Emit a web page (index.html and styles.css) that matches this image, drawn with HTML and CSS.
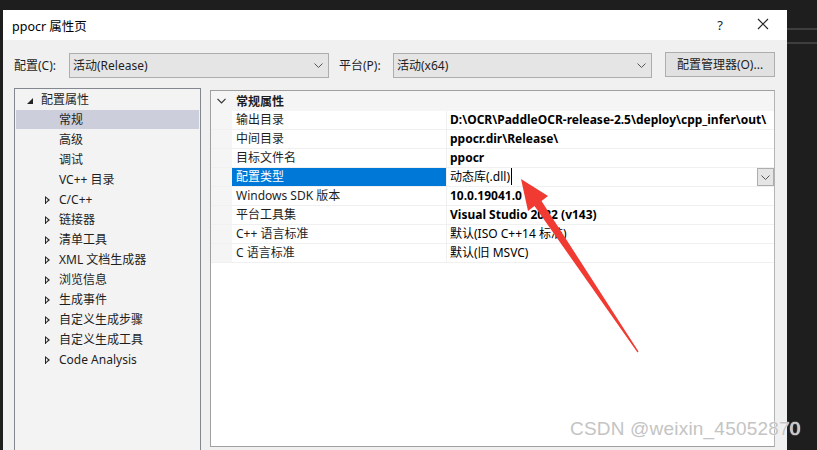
FILE: index.html
```html
<!DOCTYPE html>
<html lang="zh-CN">
<head>
    <meta charset="UTF-8">
    <title>ppocr 属性页</title>
    <link rel="stylesheet" href="styles.css">
</head>
<body>
    <div class="side-left"></div>
    <div class="window">
        <div class="titlebar">
            <span class="title">ppocr 属性页</span>
            <span class="help">?</span>
            <svg class="close" width="12" height="12" viewBox="0 0 12 12"><path d="M1 1L11 11M11 1L1 11" stroke="#222" stroke-width="1.1" fill="none"/></svg>
        </div>
        <div class="content">
            <div class="toolbar">
                <span class="tb-label">配置(C):</span>
                <div class="combo combo-config">
                    <span>活动(Release)</span>
                    <svg class="chev" width="9" height="5" viewBox="0 0 9 5"><path d="M0.5 0.5L4.5 4.5L8.5 0.5" stroke="#555" fill="none"/></svg>
                </div>
                <span class="tb-label tb-platform">平台(P):</span>
                <div class="combo combo-platform">
                    <span>活动(x64)</span>
                    <svg class="chev" width="9" height="5" viewBox="0 0 9 5"><path d="M0.5 0.5L4.5 4.5L8.5 0.5" stroke="#555" fill="none"/></svg>
                </div>
                <button class="btn">配置管理器(O)...</button>
            </div>
            <div class="main">
                <div class="tree">
                    <div class="node root"><span class="exp"></span>配置属性</div>
                    <div class="node leaf selected">常规</div>
                    <div class="node leaf">高级</div>
                    <div class="node leaf">调试</div>
                    <div class="node leaf">VC++ 目录</div>
                    <div class="node child"><span class="col"></span>C/C++</div>
                    <div class="node child"><span class="col"></span>链接器</div>
                    <div class="node child"><span class="col"></span>清单工具</div>
                    <div class="node child"><span class="col"></span>XML 文档生成器</div>
                    <div class="node child"><span class="col"></span>浏览信息</div>
                    <div class="node child"><span class="col"></span>生成事件</div>
                    <div class="node child"><span class="col"></span>自定义生成步骤</div>
                    <div class="node child"><span class="col"></span>自定义生成工具</div>
                    <div class="node child"><span class="col"></span>Code Analysis</div>
                </div>
                <div class="grid">
                    <div class="group">
                        <svg class="group-chev" width="9" height="6" viewBox="0 0 9 6"><path d="M0.5 0.8L4.5 4.8L8.5 0.8" stroke="#333" stroke-width="1.2" fill="none"/></svg>
                        <span>常规属性</span>
                    </div>
                    <div class="row">
                        <div class="gutter"></div>
                        <div class="name">输出目录</div>
                        <div class="value bold">D:\OCR\PaddleOCR-release-2.5\deploy\cpp_infer\out\</div>
                    </div>
                    <div class="row">
                        <div class="gutter"></div>
                        <div class="name">中间目录</div>
                        <div class="value bold">ppocr.dir\Release\</div>
                    </div>
                    <div class="row">
                        <div class="gutter"></div>
                        <div class="name">目标文件名</div>
                        <div class="value bold">ppocr</div>
                    </div>
                    <div class="row">
                        <div class="gutter"></div>
                        <div class="name active">配置类型</div>
                        <div class="value">
                            <span class="caret">动态库(.dll)</span>
                            <span class="drop">
                                <svg width="9" height="5" viewBox="0 0 9 5"><path d="M0.5 0.5L4.5 4.5L8.5 0.5" stroke="#555" fill="none"/></svg>
                            </span>
                        </div>
                    </div>
                    <div class="row">
                        <div class="gutter"></div>
                        <div class="name">Windows SDK 版本</div>
                        <div class="value bold">10.0.19041.0</div>
                    </div>
                    <div class="row">
                        <div class="gutter"></div>
                        <div class="name">平台工具集</div>
                        <div class="value bold">Visual Studio 2022 (v143)</div>
                    </div>
                    <div class="row">
                        <div class="gutter"></div>
                        <div class="name">C++ 语言标准</div>
                        <div class="value">默认(ISO C++14 标准)</div>
                    </div>
                    <div class="row">
                        <div class="gutter"></div>
                        <div class="name">C 语言标准</div>
                        <div class="value">默认(旧 MSVC)</div>
                    </div>
                </div>
            </div>
        </div>
    </div>
    <div class="side-right">
        <div class="line"></div>
        <div class="line line-2"></div>
    </div>

    <svg class="arrow" width="817" height="450" viewBox="0 0 817 450">
        <polygon points="521,179 548,196 541.5,201 638.5,351.5 637.5,352.5 534.5,206 528,211" fill="#f03a32"/>
    </svg>
    <div class="watermark">CSDN @weixin_45052870</div>
</body>
</html>
```

FILE: styles.css
```css
body {
    margin: 0;
    width: 817px;
    height: 450px;
    overflow: hidden;
    background: #1e1e1e;
    display: flex;
    font-family: "Noto Sans", "Noto Sans CJK SC", sans-serif;
    font-size: 12px;
    color: #1e1e1e;
    position: relative;
}

.side-left {
    width: 3px;
}

.window {
    width: 784px;
    margin-top: 10px;
    display: flex;
    flex-direction: column;
    background: #f0f0f0;
}

.side-right {
    flex: 1;
    padding-top: 28px;
}

.side-right .line {
    height: 2px;
    background: #3e3e3e;
}

.side-right .line-2 {
    margin-top: 12px;
}

/* title bar */
.titlebar {
    height: 30px;
    background: #fff;
    display: flex;
    align-items: center;
    padding: 0 18px 0 9px;
}

.title {
    font-size: 12.5px;
    color: #000;
    flex: 1;
    padding-top: 1px;
}

.help {
    font-size: 13px;
    color: #222;
    margin-right: 34px;
}

.close {
    margin-bottom: 2px;
}

/* toolbar */
.content {
    flex: 1;
    display: flex;
    flex-direction: column;
}

.toolbar {
    display: flex;
    align-items: center;
    height: 27px;
    margin-top: 11px;
    padding-left: 11px;
}

.tb-label {
    width: 55px;
}

.tb-platform {
    margin-left: 10px;
    width: 54px;
}

.combo {
    margin-top: 1px;
    border: 1px solid #adadad;
    background: #e5e5e5;
    display: flex;
    align-items: center;
    padding: 0 5px 0 3px;
    box-sizing: border-box;
    height: 25px;
}

.combo span {
    flex: 1;
}

.combo-config {
    width: 260px;
}

.combo-platform {
    width: 259px;
}

.btn {
    margin-left: 13px;
    width: 110px;
    height: 25px;
    margin-bottom: 1px;
    border: 1px solid #adadad;
    background: #e1e1e1;
    font-family: inherit;
    font-size: 12px;
    color: #1e1e1e;
    padding: 0;
}

/* main area */
.main {
    display: flex;
    margin-top: 10px;
    padding-left: 11px;
    flex: 1;
}

.tree {
    width: 185px;
    border: 1px solid #828790;
    border-bottom: none;
    background: #f3f3f3;
    padding-top: 1px;
}

.node {
    height: 20px;
    line-height: 20px;
    display: flex;
    align-items: center;
    white-space: nowrap;
}

.node.root {
    padding-left: 12px;
}

.node.leaf {
    padding-left: 44px;
}

.node.child {
    padding-left: 30px;
}

.node.selected {
    background: #cccedb;
    margin: 0 1px;
    padding-left: 43px;
    height: 19px;
    margin-bottom: 1px;
}

.exp {
    width: 0;
    height: 0;
    border-left: 6px solid transparent;
    border-bottom: 6px solid #262626;
    margin-right: 8px;
    margin-top: 1px;
}

.col {
    width: 4px;
    height: 7px;
    margin-right: 9px;
    position: relative;
    border-left: 1px solid #262626;
}

.col::after {
    content: "";
    position: absolute;
    left: -1px;
    top: -1px;
    width: 0;
    height: 0;
    border-top: 4.5px solid transparent;
    border-bottom: 4.5px solid transparent;
    border-left: 5px solid #262626;
}

.col::before {
    content: "";
    position: absolute;
    left: 0;
    top: 1px;
    width: 0;
    height: 0;
    border-top: 2.5px solid transparent;
    border-bottom: 2.5px solid transparent;
    border-left: 2.8px solid #f3f3f3;
    z-index: 1;
}

/* property grid */
.grid {
    margin-left: 9px;
    margin-top: 2px;
    width: 563px;
    height: 355px;
    border: 1px solid #a0a0a0;
    border-right-color: #b4b4b4;
    background: #fff;
    overflow: hidden;
}

.group {
    height: 20px;
    display: flex;
    align-items: center;
    background: #f5f5f5;
    font-weight: bold;
    color: #1e1e1e;
}

.group-chev {
    margin-left: 6px;
    margin-right: 10px;
}

.row {
    display: flex;
    height: 18px;
    border-bottom: 1px solid #f0f0f0;
    line-height: 18px;
}

.gutter {
    width: 21px;
    background: #f5f5f5;
}

.name {
    width: 210px;
    padding-left: 4px;
    white-space: nowrap;
}

.name.active {
    background: #0078d7;
    color: #fff;
}

.value {
    flex: 1;
    border-left: 1px solid #f0f0f0;
    padding-left: 3px;
    white-space: nowrap;
    overflow: hidden;
    display: flex;
    color: #000;
}

.bold {
    font-weight: bold;
}

.caret {
    border-right: 1px solid #000;
    padding-right: 1px;
    height: 17px;
}

.drop {
    margin-left: auto;
    width: 15px;
    height: 16px;
    border: 1px solid #adadad;
    background: #e5e5e5;
    display: flex;
    align-items: center;
    justify-content: center;
}

/* overlays */
.arrow {
    position: absolute;
    left: 0;
    top: 0;
    pointer-events: none;
}

.watermark {
    position: absolute;
    left: 570px;
    top: 418px;
    font-family: "Liberation Sans", Arial, sans-serif;
    font-size: 19px;
    color: #c4c4c4;
    text-shadow: 0 0 1px #fff, 0 0 1px #fff;
    letter-spacing: 0.2px;
}
```
